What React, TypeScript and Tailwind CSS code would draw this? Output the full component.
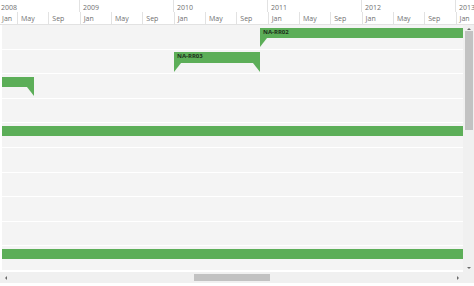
import React from "react";

const GREEN = "#5cae58";
const YEAR_W = 94;
const MONTH_W = 94 / 3;

type Bar = {
  row: number;
  start: number;
  end: number;
  label?: string;
  leftTip?: boolean;
  rightTip?: boolean;
};

const bars: Bar[] = [
  { row: 0, start: 260, end: 463, label: "NA-RR02", leftTip: true },
  { row: 1, start: 174, end: 260, label: "NA-RR03", leftTip: true, rightTip: true },
  { row: 2, start: 2, end: 34, rightTip: true },
  { row: 4, start: 2, end: 463 },
  { row: 9, start: 2, end: 463 },
];

const years = ["2009", "2010", "2011", "2012", "2013"];
const months = ["May", "Sep", "Jan", "May", "Sep", "Jan", "May", "Sep", "Jan", "May", "Sep", "Jan", "May", "Sep", "Jan"];

const Tip: React.FC<{ side: "left" | "right" }> = ({ side }) => (
  <svg
    width="7"
    height="9"
    viewBox="0 0 7 9"
    className={side === "left" ? "absolute left-0 top-full" : "absolute right-0 top-full"}
  >
    <polygon points={side === "left" ? "0,0 7,0 0,9" : "0,0 7,0 7,9"} fill={GREEN} />
  </svg>
);

export default function App() {
  return (
    <div
      className="w-[474px] h-[286px] bg-white overflow-hidden relative text-[#707070]"
      style={{ fontFamily: '"Open Sans", "DejaVu Sans", sans-serif' }}
    >
      {/* timescale header */}
      <div className="h-[25px] border-b border-[#e2e2e2] overflow-hidden text-[7px] leading-[12px]">
        <div className="flex h-[12px] whitespace-nowrap">
          <div className="w-[79px] shrink-0 pl-[1px] pt-[2px]">2008</div>
          {years.map((y) => (
            <div key={y} className="shrink-0 border-l border-[#e2e2e2] pl-[3px] pt-[2px]" style={{ width: YEAR_W }}>
              {y}
            </div>
          ))}
        </div>
        <div className="flex h-[12px] whitespace-nowrap">
          <div className="w-[17px] shrink-0 pl-[2px] pt-[1px]">Jan</div>
          {months.map((m, i) => (
            <div key={i} className="shrink-0 border-l border-[#e2e2e2] pl-[3px] pt-[1px]" style={{ width: MONTH_W }}>
              {m}
            </div>
          ))}
        </div>
      </div>

      {/* body */}
      <div className="flex h-[247px]">
        <div className="flex-1 pl-[2px] overflow-hidden">
          {Array.from({ length: 10 }).map((_, r) => (
            <div key={r} className="relative h-[24.6px] bg-[#f4f4f4] border-b border-white">
              {bars
                .filter((b) => b.row === r)
                .map((b, i) => (
                  <div
                    key={i}
                    className="absolute top-[2.5px] h-[10.5px]"
                    style={{ left: b.start - 2, width: b.end - b.start, background: GREEN }}
                  >
                    {b.label && (
                      <span className="absolute left-[3px] top-[0px] text-[6px] leading-[8px] font-bold text-[#1c2e1b]">
                        {b.label}
                      </span>
                    )}
                    {b.leftTip && <Tip side="left" />}
                    {b.rightTip && <Tip side="right" />}
                  </div>
                ))}
            </div>
          ))}
        </div>
        {/* vertical scrollbar */}
        <div className="w-[11px] bg-[#f0f0f0] flex flex-col items-center">
          <div className="h-[6px] flex items-center justify-center pt-[1px]">
            <div className="w-0 h-0 border-l-[2px] border-r-[2px] border-b-[2px] border-l-transparent border-r-transparent border-b-[#6a6a6a]" />
          </div>
          <div className="w-[8px] h-[99px] bg-[#c2c2c2]" />
          <div className="flex-1" />
          <div className="h-[6px] flex items-center justify-center pb-[2px]">
            <div className="w-0 h-0 border-l-[2px] border-r-[2px] border-t-[2px] border-l-transparent border-r-transparent border-t-[#6a6a6a]" />
          </div>
        </div>
      </div>

      {/* horizontal scrollbar */}
      <div className="flex h-[11px]">
        <div className="flex-1 bg-[#f0f0f0] flex items-center">
          <div className="w-[12px] flex justify-center">
            <div className="w-0 h-0 border-t-[2px] border-b-[2px] border-r-[2px] border-t-transparent border-b-transparent border-r-[#6a6a6a]" />
          </div>
          <div className="w-[182px]" />
          <div className="w-[76px] h-[7px] bg-[#c2c2c2]" />
          <div className="flex-1" />
          <div className="w-[10px] flex justify-center">
            <div className="w-0 h-0 border-t-[2px] border-b-[2px] border-l-[2px] border-t-transparent border-b-transparent border-l-[#6a6a6a]" />
          </div>
        </div>
        <div className="w-[11px] bg-[#f0f0f0]" />
      </div>
    </div>
  );
}
